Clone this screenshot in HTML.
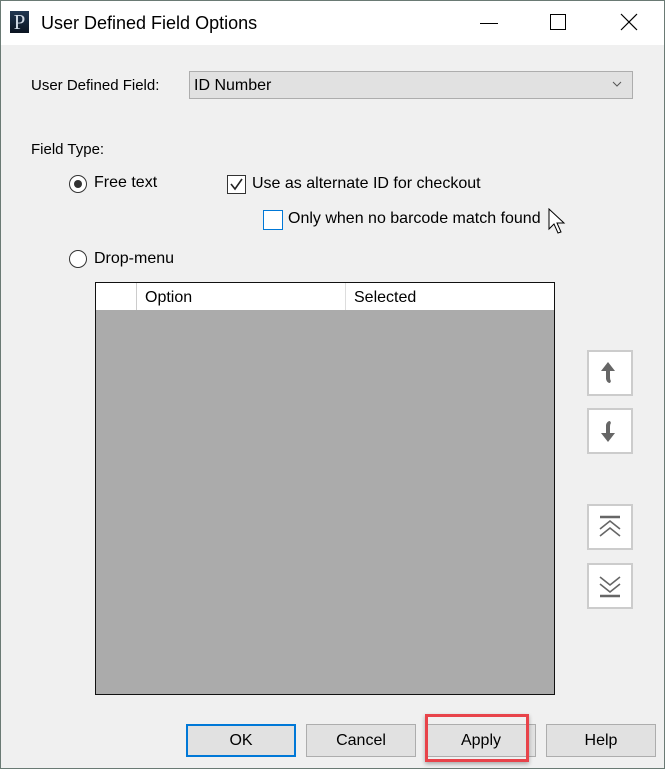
<!DOCTYPE html>
<html><head><style>
*{margin:0;padding:0;box-sizing:border-box}
body{width:665px;height:769px;background:#f0f0f0;font-family:"Liberation Sans",sans-serif;font-size:15px;color:#000;position:relative;overflow:hidden}
.a{position:absolute}
.frame{left:0;top:0;width:665px;height:769px;border:1px solid #6a7a74}
.btn{position:absolute;height:33px;background:#e1e1e1;border:1px solid #adadad;text-align:center;line-height:31px;font-size:16px}
.sb{position:absolute;width:46px;height:46px;background:#fff;border:2px solid #cccccc}
</style></head><body>
<div class="a" style="left:0;top:0;width:665px;height:45px;background:#fff"></div>
<div class="a" style="left:10px;top:11px;width:19px;height:22px;background:linear-gradient(#1f3550,#0b1420);color:#cfd8e4;font-family:'Liberation Serif',serif;font-size:21px;line-height:22px;text-align:center">P</div>
<div class="a" style="left:41px;top:13px;font-size:18px">User Defined Field Options</div>
<div class="a" style="left:480px;top:23px;width:18px;height:1px;background:#000"></div>
<div class="a" style="left:550px;top:14px;width:16px;height:16px;border:1px solid #000"></div>
<svg class="a" style="left:620px;top:13px" width="18" height="18"><path d="M1 1L17 17M17 1L1 17" stroke="#000" stroke-width="1.2"/></svg>

<div class="a" style="left:31px;top:77px">User Defined Field:</div>
<div class="a" style="left:189px;top:71px;width:444px;height:28px;background:#e1e1e1;border:1px solid #adadad;padding:5px 0 0 4px;font-size:16px">ID Number</div>
<svg class="a" style="left:612px;top:80px" width="10" height="8"><path d="M1 2L5 6L9 2" stroke="#555" fill="none"/></svg>

<div class="a" style="left:31px;top:141px">Field Type:</div>
<div class="a" style="left:69px;top:175px;width:18px;height:18px;border:1px solid #333;border-radius:50%;background:#fff"></div>
<div class="a" style="left:74px;top:180px;width:8px;height:8px;border-radius:50%;background:#333"></div>
<div class="a" style="left:94px;top:174px;font-size:16px">Free text</div>
<div class="a" style="left:227px;top:175px;width:19px;height:19px;border:1px solid #333;background:#fff"></div>
<svg class="a" style="left:229px;top:177px" width="15" height="15"><path d="M2 7L6 12L13 2" stroke="#222" stroke-width="1.6" fill="none"/></svg>
<div class="a" style="left:252px;top:175px;font-size:16px">Use as alternate ID for checkout</div>
<div class="a" style="left:263px;top:210px;width:20px;height:20px;border:1px solid #0078d7;background:#fff"></div>
<div class="a" style="left:288px;top:210px;font-size:16px">Only when no barcode match found</div>
<svg class="a" style="left:548px;top:208px" width="20" height="28"><path d="M1 1L1 21L6 16L10 25L13 24L9 15L16 15Z" fill="#fff" stroke="#000"/></svg>
<div class="a" style="left:69px;top:250px;width:18px;height:18px;border:1px solid #333;border-radius:50%;background:#fff"></div>
<div class="a" style="left:94px;top:250px;font-size:16px">Drop-menu</div>

<div class="a" style="left:95px;top:282px;width:460px;height:413px;background:#ababab;border:1px solid #111"></div>
<div class="a" style="left:96px;top:283px;width:458px;height:27px;background:#fff"></div>
<div class="a" style="left:136px;top:283px;width:1px;height:27px;background:#ccc"></div>
<div class="a" style="left:345px;top:283px;width:1px;height:27px;background:#ddd"></div>
<div class="a" style="left:145px;top:289px;font-size:16px">Option</div>
<div class="a" style="left:354px;top:289px;font-size:16px">Selected</div>

<div class="sb" style="left:587px;top:350px"></div>
<svg class="a" style="left:598px;top:361px" width="24" height="24"><path d="M10 1L3 10L8 10L8 18Q9 22 12 22L13 20Q12 19 12 16L12 10L17 10Z" fill="#666"/></svg>
<div class="sb" style="left:587px;top:408px"></div>
<svg class="a" style="left:598px;top:419px" width="24" height="24"><path d="M10 23L3 14L8 14L8 6Q9 2 12 2L13 4Q12 5 12 8L12 14L17 14Z" fill="#666"/></svg>
<div class="sb" style="left:587px;top:504px"></div>
<svg class="a" style="left:598px;top:515px" width="24" height="24"><path d="M2 2H22" stroke="#666" stroke-width="2.5"/><path d="M2 14L12 6L22 14M2 21L12 13L22 21" stroke="#666" stroke-width="1.6" fill="none"/></svg>
<div class="sb" style="left:587px;top:563px"></div>
<svg class="a" style="left:598px;top:574px" width="24" height="24"><path d="M2 22H22" stroke="#666" stroke-width="2.5"/><path d="M2 3L12 11L22 3M2 10L12 18L22 10" stroke="#666" stroke-width="1.6" fill="none"/></svg>

<div class="btn" style="left:186px;top:724px;width:110px;border:2px solid #0078d7;line-height:29px">OK</div>
<div class="btn" style="left:306px;top:724px;width:110px">Cancel</div>
<div class="btn" style="left:426px;top:724px;width:110px">Apply</div>
<div class="btn" style="left:546px;top:724px;width:110px">Help</div>
<div class="a" style="left:425px;top:714px;width:104px;height:48px;border:3px solid #e8434a;box-shadow:0 2px 4px rgba(0,0,0,.3)"></div>
<div class="a frame"></div>
</body></html>
